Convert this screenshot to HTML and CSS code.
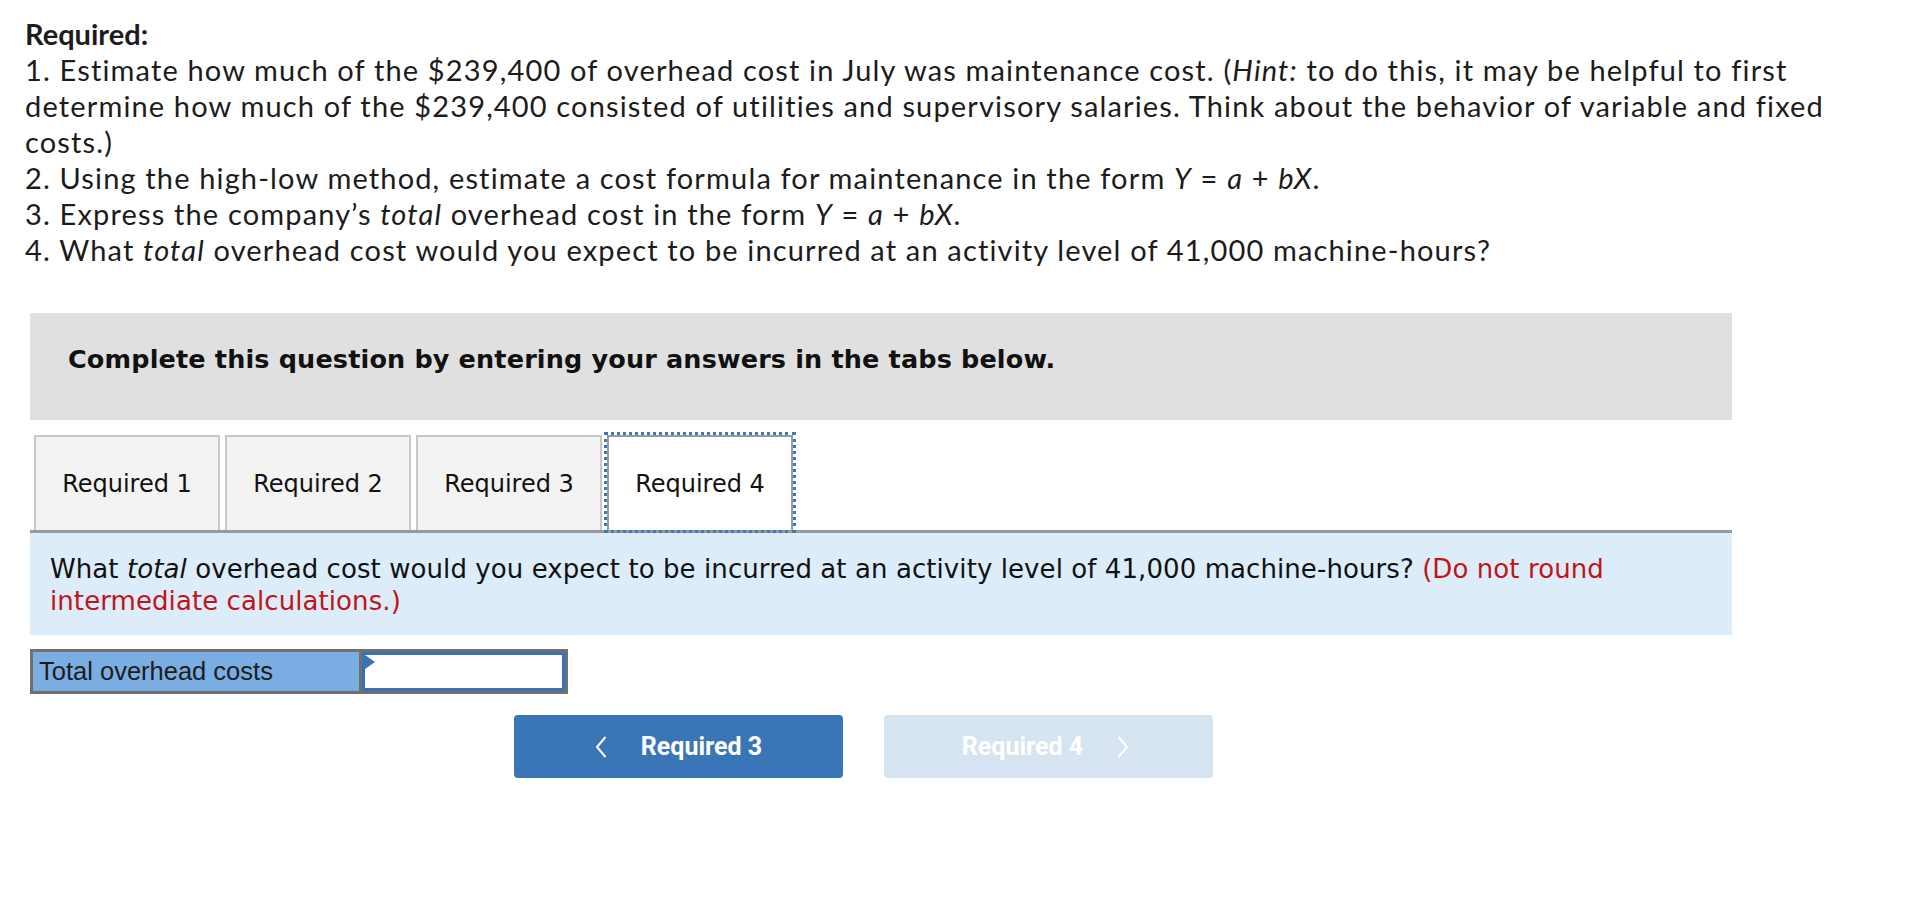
FILE: index.html
```html
<!DOCTYPE html>
<html lang="en">
<head>
  <meta charset="UTF-8" />
  <title>Required</title>
  <link rel="stylesheet" href="styles.css">
</head>
<body>
  <div class="page">

    <!-- Question text -->
    <div class="intro">
      <div class="intro-title">Required:</div>
      <div>1. Estimate how much of the $239,400 of overhead cost in July was maintenance cost. (<i>Hint:</i> to do this, it may be helpful to first<br>determine how much of the $239,400 consisted of utilities and supervisory salaries. Think about the behavior of variable and fixed<br>costs.)</div>
      <div>2. Using the high-low method, estimate a cost formula for maintenance in the form <i>Y</i> = <i>a</i> + <i>bX</i>.</div>
      <div>3. Express the company’s <i>total</i> overhead cost in the form <i>Y</i> = <i>a</i> + <i>bX</i>.</div>
      <div>4. What <i>total</i> overhead cost would you expect to be incurred at an activity level of 41,000 machine-hours?</div>
    </div>

    <div class="instructions">Complete this question by entering your answers in the tabs below.</div>

    <!-- Tabs -->
    <div class="tabs">
      <button class="tab">Required 1</button>
      <button class="tab">Required 2</button>
      <button class="tab">Required 3</button>
      <button class="tab active">Required 4</button>
    </div>

    <div class="panel">
      What <i>total</i> overhead cost would you expect to be incurred at an activity level of 41,000 machine-hours? <span class="note">(Do not round<br>intermediate calculations.)</span>
    </div>

    <table class="answer">
      <tr>
        <td class="answer-label">Total overhead costs</td>
        <td class="answer-cell"><input type="text" aria-label="Total overhead costs" /></td>
      </tr>
    </table>

    <div class="nav">
      <button class="nav-btn">
        <svg width="12" height="22" viewBox="0 0 12 22"><polyline points="10.5,1 2,11 10.5,21" fill="none" stroke="#fff" stroke-width="2" /></svg>
        Required 3
      </button>
      <button class="nav-btn disabled">
        Required 4
        <svg width="12" height="22" viewBox="0 0 12 22"><polyline points="1.5,1 10,11 1.5,21" fill="none" stroke="#fff" stroke-width="2" /></svg>
      </button>
    </div>

  </div>
</body>
</html>
```

FILE: styles.css
```css
* {
  box-sizing: border-box;
}
body {
  margin: 0;
  background: #fff;
  color: #1c1c1c;
}
.page {
  padding: 16px 0 0 30px;
  width: 1732px;
}
.intro {
  font-family: Lato, 'Open Sans', sans-serif;
  font-size: 29px;
  line-height: 36px;
  letter-spacing: 1.15px;
  font-variant-ligatures: none;
  margin-left: -5px;
  white-space: nowrap;
}
.intro-title {
  font-weight: 700;
  letter-spacing: 0;
}
.instructions {
  margin-top: 45px;
  background: #e0e0e0;
  height: 107px;
  padding: 31px 38px;
  font-family: 'DejaVu Sans', Verdana, sans-serif;
  font-weight: 700;
  font-size: 25.5px;
  letter-spacing: 0.15px;
  color: #111;
}
.tabs {
  display: flex;
  align-items: flex-start;
  gap: 5px;
  margin-top: 15px;
  padding-left: 4px;
  border-bottom: 3px solid #999;
}
.tab {
  width: 186px;
  height: 95px;
  border: 2px solid #c8c8c8;
  border-bottom: none;
  background: #f3f3f3;
  font-family: 'DejaVu Sans', Verdana, sans-serif;
  font-size: 24px;
  color: #111;
  padding: 0;
}
.tab.active {
  border-color: #999;
  background: #fff;
  outline: 3px dotted #3b78c2;
  outline-offset: 0;
}
.panel {
  background: #dcecf8;
  padding: 20px 20px 18px;
  font-family: 'DejaVu Sans', Verdana, sans-serif;
  font-size: 26px;
  line-height: 32px;
  letter-spacing: 0.08px;
  color: #111;
}
.note {
  color: #c0141b;
}
.answer {
  margin-top: 14px;
  border-collapse: collapse;
  border: 3px solid #707070;
}
.answer td {
  padding: 0;
  height: 39px;
}
.answer-label {
  width: 329px;
  background: #7aade2;
  border-right: 3px solid #707070;
  font-family: 'Liberation Sans', Arial, sans-serif;
  font-size: 25.5px;
  color: #1c1c1c;
  padding-left: 6px !important;
}
.answer-cell {
  width: 206px;
  position: relative;
}
.answer-cell::before {
  content: "";
  position: absolute;
  left: 3px;
  top: 3px;
  border-left: 10px solid #3a72b5;
  border-top: 7px solid transparent;
  border-bottom: 7px solid transparent;
}
.answer-cell input {
  display: block;
  width: 100%;
  height: 39px;
  margin: 0;
  border: 3px solid #3a72b5;
  outline: none;
  font-size: 22px;
  text-align: right;
}
.nav {
  display: flex;
  gap: 41px;
  margin-top: 21px;
  padding-left: 484px;
}
.nav-btn {
  width: 329px;
  height: 63px;
  border: none;
  border-radius: 4px;
  background: #3a76b7;
  color: #fff;
  font-family: Roboto, sans-serif;
  font-weight: 700;
  font-size: 25px;
  display: flex;
  align-items: center;
  justify-content: center;
  gap: 34px;
  padding-left: 6px;
}
.nav-btn.disabled {
  background: #d6e3f1;
  padding-left: 0;
}
```
